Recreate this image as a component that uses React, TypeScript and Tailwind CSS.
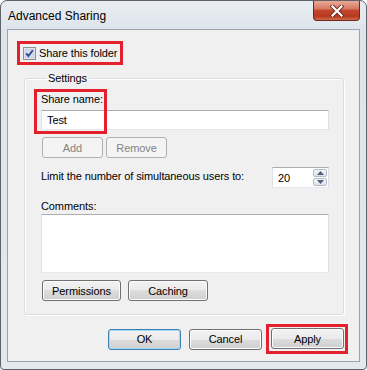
import React from 'react';

const font = { fontFamily: '"Liberation Sans", Arial, sans-serif' };

function Button({ label, w, disabled, primary }: { label: string; w: string; disabled?: boolean; primary?: boolean }) {
  if (disabled) {
    return (
      <div className={`${w} h-[21px] flex items-center justify-center rounded-[3px] border border-[#adb2b5] bg-[#f4f4f4] text-[#838383]`}>
        {label}
      </div>
    );
  }
  return (
    <div
      className={`${w} h-[21px] flex items-center justify-center rounded-[3px] border ${
        primary ? 'border-[#3c7fb1] shadow-[inset_0_0_0_1px_#9fdcf6]' : 'border-[#707070] shadow-[inset_0_0_0_1px_#fcfcfc]'
      } bg-[linear-gradient(#f2f2f2_0%,#ebebeb_50%,#dddddd_50%,#cfcfcf_100%)] text-black`}
    >
      {label}
    </div>
  );
}

function Checkbox() {
  return (
    <svg width="13" height="13" viewBox="0 0 13 13" className="shrink-0">
      <rect x="0.5" y="0.5" width="12" height="12" fill="#f4f4f4" stroke="#8e8f8f" />
      <rect x="2" y="2" width="9" height="9" fill="#d3deee" stroke="#aebbd4" strokeWidth="0.6" />
      <path d="M3.2 6.3 L5.4 9 L9.8 3.2" fill="none" stroke="#2f4699" strokeWidth="1.9" />
    </svg>
  );
}

function CloseButton() {
  return (
    <div className="w-[47px] h-[20px] rounded-b-[4px] border border-t-0 border-[#6a2a20] bg-[linear-gradient(#e9a99a_0%,#d77a64_40%,#c2462d_50%,#b8391f_80%,#d0694c_100%)] flex items-center justify-center">
      <svg width="14" height="12" viewBox="0 0 14 12">
        <path d="M2.5 1.5 L11.5 10.5 M11.5 1.5 L2.5 10.5" stroke="#6b2a1d" strokeWidth="4" strokeLinecap="square" />
        <path d="M2.5 1.5 L11.5 10.5 M11.5 1.5 L2.5 10.5" stroke="#ffffff" strokeWidth="2.2" strokeLinecap="square" />
      </svg>
    </div>
  );
}

function Spinner() {
  return (
    <div className="w-[57px] h-[21px] flex border border-[#abadb3] border-b-[#e3e9ef] border-x-[#dbdfe6] bg-white">
      <div className="flex-1 flex items-center pl-[5px]">20</div>
      <div className="w-[16px] flex flex-col p-[1px] gap-[1px]">
        <div className="flex-1 flex items-center justify-center rounded-[2px] border border-[#b5bcc7] bg-[linear-gradient(#f5f5f5,#dfe3e8)]">
          <svg width="7" height="4" viewBox="0 0 7 4">
            <path d="M0 4 L3.5 0 L7 4 Z" fill="#4d5f86" />
          </svg>
        </div>
        <div className="flex-1 flex items-center justify-center rounded-[2px] border border-[#b5bcc7] bg-[linear-gradient(#f5f5f5,#dfe3e8)]">
          <svg width="7" height="4" viewBox="0 0 7 4">
            <path d="M0 0 L3.5 4 L7 0 Z" fill="#4d5f86" />
          </svg>
        </div>
      </div>
    </div>
  );
}

export default function App() {
  return (
    <div className="w-[367px] h-[370px] text-[11px] leading-[16px] tracking-[-0.1px] text-black" style={font}>
      <div className="w-full h-full flex flex-col rounded-t-[7px] rounded-b-[4px] border border-[#5f6368] bg-[linear-gradient(#e9edf2,#dde4eb_30px,#e4e9ee)]">
        {/* title bar */}
        <div className="h-[28px] flex justify-between shrink-0">
          <div className="pl-[7px] pt-[6px] text-[12px] leading-[18px] tracking-normal text-black">Advanced Sharing</div>
          <div className="pr-[6px]">
            <CloseButton />
          </div>
        </div>

        {/* client area */}
        <div className="mx-[6px] h-[333px] border border-[#9aa4ae] bg-[#f0f0f0] flex flex-col">
          <div className="pt-[11px] pl-[9px]">
            <div className="w-[106px] h-[24px] flex items-center gap-[3px] border-[3px] border-[#e3202c] pl-[3px] whitespace-nowrap">
              <Checkbox />
              <span>Share this folder</span>
            </div>
          </div>

          <fieldset className="relative mt-[5px] ml-[16px] w-[320px] rounded-[3px] border border-[#d5dfe5] shadow-[inset_1px_1px_0_#ffffff,1px_1px_0_#ffffff] pl-[16px] pr-[14px] pb-[13px]">
            <legend className="ml-[5px] px-[2px]">Settings</legend>

            {/* annotation overlay */}
            <div className="absolute left-[9px] top-[3px] w-[73px] h-[45px] border-[3px] border-[#e3202c] pointer-events-none" />

            <div className="mt-[5px]">Share name:</div>
            <div className="mt-[3px] h-[20px] flex items-center pl-[5px] border border-[#abadb3] border-b-[#e3e9ef] border-x-[#dbdfe6] bg-white">
              Test
            </div>

            <div className="mt-[7px] ml-[1px] flex gap-[3px]">
              <Button label="Add" w="w-[61px]" disabled />
              <Button label="Remove" w="w-[61px]" disabled />
            </div>

            <div className="mt-[9px] flex items-center justify-between">
              <span className="-mt-[4px]">Limit the number of simultaneous users to:</span>
              <Spinner />
            </div>

            <div className="mt-[11px] leading-[14px]">Comments:</div>
            <div className="mt-[1px] h-[59px] border border-[#abadb3] border-b-[#e3e9ef] border-x-[#dbdfe6] bg-white" />

            <div className="mt-[7px] ml-[1px] flex gap-[7px]">
              <Button label="Permissions" w="w-[79px]" />
              <Button label="Caching" w="w-[80px]" />
            </div>
          </fieldset>

          <div className="mt-[9px] pr-[11px] flex items-center justify-end">
            <Button label="OK" w="w-[73px]" primary />
            <div className="ml-[8px]">
              <Button label="Cancel" w="w-[73px]" />
            </div>
            <div className="ml-[4px] border-[3px] border-[#e3202c] pl-[2px] pr-[1px] pt-[1px] pb-[2px]">
              <Button label="Apply" w="w-[73px]" />
            </div>
          </div>
        </div>
      </div>
    </div>
  );
}
